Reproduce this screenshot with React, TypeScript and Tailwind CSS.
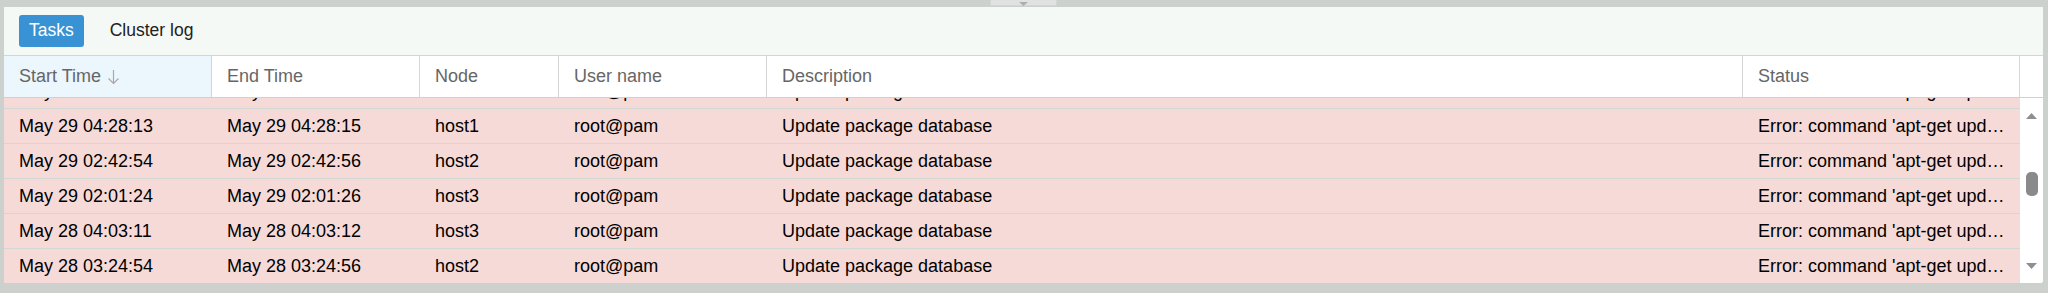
import React from "react";

interface TaskRow {
  start: string;
  end: string;
  node: string;
  user: string;
  desc: string;
  status: string;
}

const STATUS = "Error: command 'apt-get update' failed: exit code 100";

const rows: TaskRow[] = [
  { start: "May 29 05:17:40", end: "May 29 05:17:42", node: "host1", user: "root@pam", desc: "Update package database", status: STATUS },
  { start: "May 29 04:28:13", end: "May 29 04:28:15", node: "host1", user: "root@pam", desc: "Update package database", status: STATUS },
  { start: "May 29 02:42:54", end: "May 29 02:42:56", node: "host2", user: "root@pam", desc: "Update package database", status: STATUS },
  { start: "May 29 02:01:24", end: "May 29 02:01:26", node: "host3", user: "root@pam", desc: "Update package database", status: STATUS },
  { start: "May 28 04:03:11", end: "May 28 04:03:12", node: "host3", user: "root@pam", desc: "Update package database", status: STATUS },
  { start: "May 28 03:24:54", end: "May 28 03:24:56", node: "host2", user: "root@pam", desc: "Update package database", status: STATUS },
];

function SortDown() {
  return (
    <svg width="13" height="16" viewBox="0 0 13 16" className="ml-[6px]">
      <path d="M6.5 1v13.5M1.5 9.5l5 5 5-5" fill="none" stroke="#a8a8a8" strokeWidth="1.2" />
    </svg>
  );
}

function Arrow({ up }: { up?: boolean }) {
  return (
    <svg width="11" height="6" viewBox="0 0 11 6">
      <path d={up ? "M0 6L5.5 0 11 6z" : "M0 0h11L5.5 6z"} fill="#8f8f8f" />
    </svg>
  );
}

export default function App() {
  return (
    <div className="w-[2048px] h-[293px] bg-[#ccd1ce] flex flex-col overflow-hidden font-['Liberation_Sans',Arial,sans-serif] text-[18px]">
      {/* collapse handle */}
      <div className="h-[7px] flex justify-center">
        <div className="w-[67px] h-[6px] bg-[#dfe2e0] border-x border-b border-[#d3d6d4] flex justify-center items-start pt-[2px] ml-[-2px]">
          <svg width="9" height="4" viewBox="0 0 9 4">
            <path d="M0 0h9L4.5 4z" fill="#aab0ad" />
          </svg>
        </div>
      </div>

      <div className="ml-[4px] w-[2039px] h-[276px] bg-white flex flex-col overflow-hidden rounded-b-[3px]">
        {/* toolbar */}
        <div className="h-[49px] shrink-0 bg-[#f5f9f5] border-b border-[#d3d7d4] flex items-center pl-[15px] gap-[16px]">
          <button className="h-[32px] px-[10px] rounded-[3px] bg-[#3892d4] text-white text-[17.5px] leading-none">
            Tasks
          </button>
          <button className="h-[32px] px-[10px] text-[#222] text-[17.5px] leading-none">Cluster log</button>
        </div>

        {/* header */}
        <div className="h-[42px] shrink-0 flex border-b border-[#d0d0d0] text-[#666]">
          <div className="w-[208px] shrink-0 bg-[#ebf6fd] border-r border-[#d6d6d6] flex items-center pl-[15px]">
            Start Time
            <SortDown />
          </div>
          <div className="w-[208px] shrink-0 border-r border-[#d6d6d6] flex items-center pl-[15px]">End Time</div>
          <div className="w-[139px] shrink-0 border-r border-[#d6d6d6] flex items-center pl-[15px]">Node</div>
          <div className="w-[208px] shrink-0 border-r border-[#d6d6d6] flex items-center pl-[15px]">User name</div>
          <div className="w-[976px] shrink-0 border-r border-[#d6d6d6] flex items-center pl-[15px]">Description</div>
          <div className="w-[277px] shrink-0 border-r border-[#d6d6d6] flex items-center pl-[15px]">Status</div>
          <div className="flex-1" />
        </div>

        {/* body */}
        <div className="flex-1 flex min-h-0">
          <div className="w-[2016px] overflow-hidden">
            {rows.map((r, i) => (
              <div
                key={i}
                className={
                  i === 0
                    ? "h-[35px] mt-[-24px] flex items-center bg-[#f6dad7] border-b border-[#d3d8d5] text-black"
                    : "h-[35px] flex items-center bg-[#f6dad7] border-b border-[#d3d8d5] text-black"
                }
              >
                <div className="w-[208px] shrink-0 pl-[15px] whitespace-nowrap">{r.start}</div>
                <div className="w-[208px] shrink-0 pl-[15px] whitespace-nowrap">{r.end}</div>
                <div className="w-[139px] shrink-0 pl-[15px] whitespace-nowrap">{r.node}</div>
                <div className="w-[208px] shrink-0 pl-[15px] whitespace-nowrap">{r.user}</div>
                <div className="w-[976px] shrink-0 pl-[15px] whitespace-nowrap">{r.desc}</div>
                <div className="w-[277px] shrink-0 pl-[15px] pr-[14px] truncate">{r.status}</div>
              </div>
            ))}
          </div>

          {/* scrollbar */}
          <div className="flex-1 bg-white flex flex-col items-center">
            <div className="mt-[15px]">
              <Arrow up />
            </div>
            <div className="mt-[53px] w-[12px] h-[24px] rounded-[5px] bg-[#8a8a8a]" />
            <div className="mt-[67px]">
              <Arrow />
            </div>
          </div>
        </div>
      </div>
    </div>
  );
}
